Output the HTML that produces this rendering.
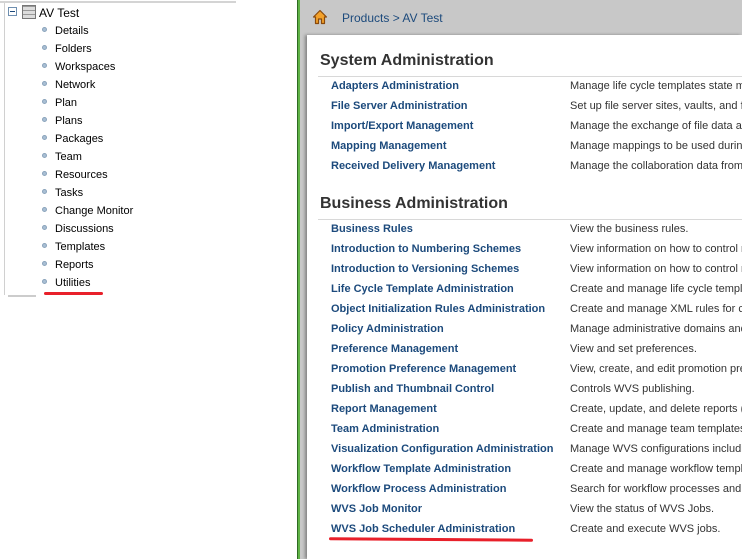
<!DOCTYPE html>
<html><head><meta charset="utf-8"><style>
*{margin:0;padding:0;box-sizing:border-box}
body{width:742px;height:559px;overflow:hidden;background:#fff;font-family:"Liberation Sans",Arial,sans-serif;position:relative}
.a{position:absolute}
.tree{font-size:11px;color:#000}
.tree .i{position:absolute;left:55px;line-height:14px}
.tree .d{position:absolute;left:42px;width:5px;height:5px;border-radius:50%;background:#a9bfd4;border:1px solid #8aa3bb}
.row{position:absolute;left:331px;font-size:11px;line-height:14px;white-space:nowrap}
.row b{color:#1c4a7c;font-weight:bold}
.desc{position:absolute;left:570px;font-size:11px;line-height:14px;color:#333;white-space:nowrap}
h2{position:absolute;left:320px;font-size:16px;font-weight:bold;color:#333}
.hr{position:absolute;left:318px;right:0;height:1px;background:#d8d8d8}
.red{position:absolute;height:3px;background:#e8202a;border-radius:2px}
</style></head><body>
<div class="a" style="left:0;top:1px;width:236px;height:2px;background:#d4d4d4"></div>
<div class="a" style="left:4px;top:3px;width:1px;height:292px;background:#d0d0d0"></div>
<div class="a" style="left:8px;top:7px;width:9px;height:9px;border:1px solid #6f8fb0;background:#fff"></div>
<div class="a" style="left:10px;top:11px;width:5px;height:1px;background:#1c4a7c"></div>
<div class="a" style="left:22px;top:5px;width:14px;height:14px;background:repeating-linear-gradient(#999 0 1px,#ddd 1px 4px);border:1px solid #777"></div>
<div class="a tree" style="left:39px;top:6px;font-size:12px;line-height:14px">AV Test</div>
<div class="tree">
<div class="d" style="top:27px"></div><div class="i" style="top:24px">Details</div>
<div class="d" style="top:45px"></div><div class="i" style="top:42px">Folders</div>
<div class="d" style="top:63px"></div><div class="i" style="top:60px">Workspaces</div>
<div class="d" style="top:81px"></div><div class="i" style="top:78px">Network</div>
<div class="d" style="top:99px"></div><div class="i" style="top:96px">Plan</div>
<div class="d" style="top:117px"></div><div class="i" style="top:114px">Plans</div>
<div class="d" style="top:135px"></div><div class="i" style="top:132px">Packages</div>
<div class="d" style="top:153px"></div><div class="i" style="top:150px">Team</div>
<div class="d" style="top:171px"></div><div class="i" style="top:168px">Resources</div>
<div class="d" style="top:189px"></div><div class="i" style="top:186px">Tasks</div>
<div class="d" style="top:207px"></div><div class="i" style="top:204px">Change Monitor</div>
<div class="d" style="top:225px"></div><div class="i" style="top:222px">Discussions</div>
<div class="d" style="top:243px"></div><div class="i" style="top:240px">Templates</div>
<div class="d" style="top:261px"></div><div class="i" style="top:258px">Reports</div>
<div class="d" style="top:279px"></div><div class="i" style="top:276px">Utilities</div>
</div>
<div class="red" style="left:44px;top:292px;width:59px"></div>
<div class="a" style="left:8px;top:295px;width:28px;height:2px;background:#ccc"></div>

<div class="a" style="left:297px;top:0;width:3px;height:559px;background:#5fb246;border-left:1px solid #2e6b22"></div>
<div class="a" style="left:300px;top:0;width:442px;height:559px;background:#c8c8c8"></div>
<div class="a" style="left:307px;top:35px;width:435px;height:524px;background:#fff;box-shadow:-2px 0 3px rgba(0,0,0,.35)"></div>
<svg class="a" style="left:312px;top:9px" width="16" height="16" viewBox="0 0 16 16"><path d="M1.5 8 L8 1.5 L14.5 8 L12.5 8 L12.5 14.5 L9.5 14.5 L9.5 10 L6.5 10 L6.5 14.5 L3.5 14.5 L3.5 8 Z" fill="#f3a12a" stroke="#8a4a0c" stroke-width="1.2" stroke-linejoin="round"/></svg>
<div class="a" style="left:342px;top:11px;font-size:12px;color:#1c4a7c">Products &gt; AV Test</div>

<h2 style="top:52px">System Administration</h2>
<div class="hr" style="top:76px"></div>
<div class="row" style="top:79px"><b>Adapters Administration</b></div><div class="desc" style="top:79px">Manage life cycle templates state m</div>
<div class="row" style="top:99px"><b>File Server Administration</b></div><div class="desc" style="top:99px">Set up file server sites, vaults, and f</div>
<div class="row" style="top:119px"><b>Import/Export Management</b></div><div class="desc" style="top:119px">Manage the exchange of file data a</div>
<div class="row" style="top:139px"><b>Mapping Management</b></div><div class="desc" style="top:139px">Manage mappings to be used durin</div>
<div class="row" style="top:159px"><b>Received Delivery Management</b></div><div class="desc" style="top:159px">Manage the collaboration data from</div>

<h2 style="top:195px">Business Administration</h2>
<div class="hr" style="top:219px"></div>
<div class="row" style="top:222px"><b>Business Rules</b></div><div class="desc" style="top:222px">View the business rules.</div>
<div class="row" style="top:242px"><b>Introduction to Numbering Schemes</b></div><div class="desc" style="top:242px">View information on how to control n</div>
<div class="row" style="top:262px"><b>Introduction to Versioning Schemes</b></div><div class="desc" style="top:262px">View information on how to control r</div>
<div class="row" style="top:282px"><b>Life Cycle Template Administration</b></div><div class="desc" style="top:282px">Create and manage life cycle templ</div>
<div class="row" style="top:302px"><b>Object Initialization Rules Administration</b></div><div class="desc" style="top:302px">Create and manage XML rules for c</div>
<div class="row" style="top:322px"><b>Policy Administration</b></div><div class="desc" style="top:322px">Manage administrative domains and</div>
<div class="row" style="top:342px"><b>Preference Management</b></div><div class="desc" style="top:342px">View and set preferences.</div>
<div class="row" style="top:362px"><b>Promotion Preference Management</b></div><div class="desc" style="top:362px">View, create, and edit promotion pre</div>
<div class="row" style="top:382px"><b>Publish and Thumbnail Control</b></div><div class="desc" style="top:382px">Controls WVS publishing.</div>
<div class="row" style="top:402px"><b>Report Management</b></div><div class="desc" style="top:402px">Create, update, and delete reports (</div>
<div class="row" style="top:422px"><b>Team Administration</b></div><div class="desc" style="top:422px">Create and manage team templates</div>
<div class="row" style="top:442px"><b>Visualization Configuration Administration</b></div><div class="desc" style="top:442px">Manage WVS configurations includi</div>
<div class="row" style="top:462px"><b>Workflow Template Administration</b></div><div class="desc" style="top:462px">Create and manage workflow templ</div>
<div class="row" style="top:482px"><b>Workflow Process Administration</b></div><div class="desc" style="top:482px">Search for workflow processes and</div>
<div class="row" style="top:502px"><b>WVS Job Monitor</b></div><div class="desc" style="top:502px">View the status of WVS Jobs.</div>
<div class="row" style="top:522px"><b>WVS Job Scheduler Administration</b></div><div class="desc" style="top:522px">Create and execute WVS jobs.</div>
<div class="red" style="left:329px;top:538px;width:204px;transform:rotate(.4deg)"></div>
</body></html>
